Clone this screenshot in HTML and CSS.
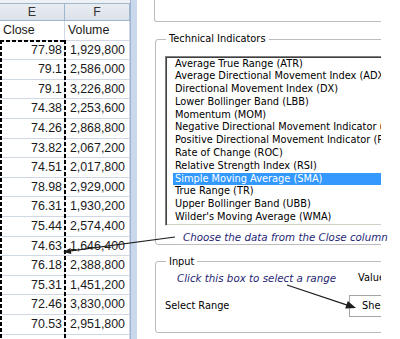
FILE: index.html
```html
<!DOCTYPE html>
<html>

<head>
  <link rel="stylesheet" href="styles.css">
  <title>Technical Indicators</title>
</head>

<body>
  <div class="page">
    <div class="sheet">
      <div class="row head">
        <div class="cell">E</div>
        <div class="cell">F</div>
      </div>
      <div class="row">
        <div class="cell label">Close</div>
        <div class="cell label">Volume</div>
      </div>
      <div class="row"><div class="cell">77.98</div><div class="cell">1,929,800</div></div>
      <div class="row"><div class="cell">79.1</div><div class="cell">2,586,000</div></div>
      <div class="row"><div class="cell">79.1</div><div class="cell">3,226,800</div></div>
      <div class="row"><div class="cell">74.38</div><div class="cell">2,253,600</div></div>
      <div class="row"><div class="cell">74.26</div><div class="cell">2,868,800</div></div>
      <div class="row"><div class="cell">73.82</div><div class="cell">2,067,200</div></div>
      <div class="row"><div class="cell">74.51</div><div class="cell">2,017,800</div></div>
      <div class="row"><div class="cell">78.98</div><div class="cell">2,929,000</div></div>
      <div class="row"><div class="cell">76.31</div><div class="cell">1,930,200</div></div>
      <div class="row"><div class="cell">75.44</div><div class="cell">2,574,400</div></div>
      <div class="row"><div class="cell">74.63</div><div class="cell">1,646,400</div></div>
      <div class="row"><div class="cell">76.18</div><div class="cell">2,388,800</div></div>
      <div class="row"><div class="cell">75.31</div><div class="cell">1,451,200</div></div>
      <div class="row"><div class="cell">72.46</div><div class="cell">3,830,000</div></div>
      <div class="row"><div class="cell">70.53</div><div class="cell">2,951,800</div></div>
      <div class="row"><div class="cell"></div><div class="cell"></div></div>
      <div class="marquee"></div>
    </div>
    <div class="edge"></div>
    <div class="dialog">
      <div class="topBox"></div>
      <fieldset class="group tech">
        <legend>Technical Indicators</legend>
        <ul class="listbox">
          <li>Average True Range (ATR)</li>
          <li>Average Directional Movement Index (ADX)</li>
          <li>Directional Movement Index (DX)</li>
          <li>Lower Bollinger Band (LBB)</li>
          <li>Momentum (MOM)</li>
          <li>Negative Directional Movement Indicator (NDI)</li>
          <li>Positive Directional Movement Indicator (PDI)</li>
          <li>Rate of Change (ROC)</li>
          <li>Relative Strength Index (RSI)</li>
          <li class="selected">Simple Moving Average (SMA)</li>
          <li>True Range (TR)</li>
          <li>Upper Bollinger Band (UBB)</li>
          <li>Wilder's Moving Average (WMA)</li>
        </ul>
      </fieldset>
      <fieldset class="group input">
        <legend>Input</legend>
        <div class="valuesRow">Values</div>
        <div class="rangeRow">
          <span class="rangeLabel">Select Range</span>
          <div class="rangeBox">Sheet1!$E$2:$E$253</div>
        </div>
      </fieldset>
    </div>

    <svg class="arrows" width="400" height="339" viewBox="0 0 400 339">
      <line x1="175" y1="237" x2="69" y2="251.2" />
      <polygon points="63,252 70.5,247.9 71.3,254" />
      <line x1="287" y1="285" x2="348" y2="305.4" />
      <polygon points="356,308 345.2,308.6 347.8,301" />
    </svg>
    <span class="note noteClose">Choose the data from the Close column</span>
    <span class="note noteRange">Click this box to select a range</span>
  </div>
</body>

</html>
```

FILE: styles.css
```css
body {
  margin: 0;
  background: #fff;
}

.page {
  position: relative;
  display: flex;
  width: 400px;
  height: 339px;
  overflow: hidden;
  background: #fff;
}

/* spreadsheet part */

.sheet {
  position: relative;
  flex: 0 0 130px;
  padding-top: 3px;
  background: #eef1f5;
  font-family: "Liberation Sans", Arial, sans-serif;
  font-size: 12.4px;
  color: #1a1a1a;
}

.row {
  display: flex;
  height: 19.6px;
  box-sizing: border-box;
  border-bottom: 1px solid #d0d7e5;
  background: #fff;
}

.cell {
  width: 65px;
  box-sizing: border-box;
  border-right: 1px solid #d0d7e5;
  padding-right: 2px;
  line-height: 18.6px;
  text-align: right;
  white-space: nowrap;
}

.cell + .cell {
  padding-right: 4px;
}

.cell.label {
  text-align: left;
  padding-left: 3px;
}

.row.head {
  height: 18px;
  border-top: 1px solid #9eb6ce;
  border-bottom: 1px solid #9eb6ce;
  background: linear-gradient(#e9edf2, #dce2ea);
}

.row.head .cell {
  border-right-color: #9eb6ce;
  padding: 0;
  line-height: 16px;
  text-align: center;
  color: #333;
}

.marquee {
  position: absolute;
  left: 0;
  top: 39.6px;
  width: 66px;
  height: 320px;
  background:
    repeating-linear-gradient(90deg, #000 0 4px, transparent 4px 6px) top left / 100% 2px no-repeat,
    repeating-linear-gradient(180deg, #000 0 4px, transparent 4px 6px) top left / 2px 100% no-repeat,
    repeating-linear-gradient(180deg, #000 0 4px, transparent 4px 6px) top right / 2px 100% no-repeat;
}

.edge {
  flex: 0 0 6px;
  border-left: 1px solid #9fb3cc;
  background: #c9d8ec;
}

/* dialog part */

.dialog {
  flex: 0 0 244px;
  overflow: hidden;
  font-family: "DejaVu Sans", Tahoma, sans-serif;
  font-size: 9.8px;
  color: #000;
}

.topBox {
  width: 400px;
  height: 22px;
  box-sizing: border-box;
  margin-left: 17px;
  border-left: 1px solid #bcbcbc;
  border-bottom: 1px solid #bcbcbc;
  border-bottom-left-radius: 3px;
}

.group {
  width: 400px;
  margin: 11px 0 0 18px;
  padding: 0;
  border: 1px solid #bcbcbc;
  border-radius: 3px;
}

.group legend {
  margin-left: 10px;
  padding: 0 3px;
  line-height: 12px;
}

.tech {
  padding-bottom: 18px;
}

.listbox {
  width: 300px;
  margin: 11px 0 0 9px;
  padding: 0.5px 0 1px 7px;
  list-style: none;
  border-top: 1px solid #808080;
  border-left: 1px solid #808080;
  border-bottom: 1px solid #fff;
  border-right: 1px solid #fff;
  box-shadow: inset 1px 1px #404040, inset -1px -1px #d4d0c8;
  background: #fff;
}

.listbox li {
  padding-left: 2px;
  line-height: 12.8px;
  white-space: nowrap;
}

.listbox li.selected {
  background: #3399ff;
  color: #fff;
}

.input {
  padding-bottom: 15px;
}

.valuesRow {
  padding-left: 202px;
  line-height: 20px;
}

.rangeRow {
  display: flex;
  align-items: center;
  margin-top: 7px;
  height: 22px;
}

.rangeLabel {
  flex: 0 0 184px;
  padding-left: 9px;
}

.rangeBox {
  width: 120px;
  height: 22px;
  box-sizing: border-box;
  border: 1px solid #a5a5a5;
  padding-left: 12px;
  line-height: 20px;
  white-space: nowrap;
}

/* callouts */

.arrows {
  position: absolute;
  left: 0;
  top: 0;
}

.arrows line {
  stroke: #1e1e1e;
  stroke-width: 1.2;
}

.arrows polygon {
  fill: #1e1e1e;
}

.note {
  position: absolute;
  font-family: "DejaVu Sans", Verdana, sans-serif;
  font-size: 10.3px;
  font-style: italic;
  line-height: 12px;
  color: #262673;
  white-space: nowrap;
}

.noteClose {
  left: 183px;
  top: 231px;
}

.noteRange {
  left: 177px;
  top: 272px;
}
```
